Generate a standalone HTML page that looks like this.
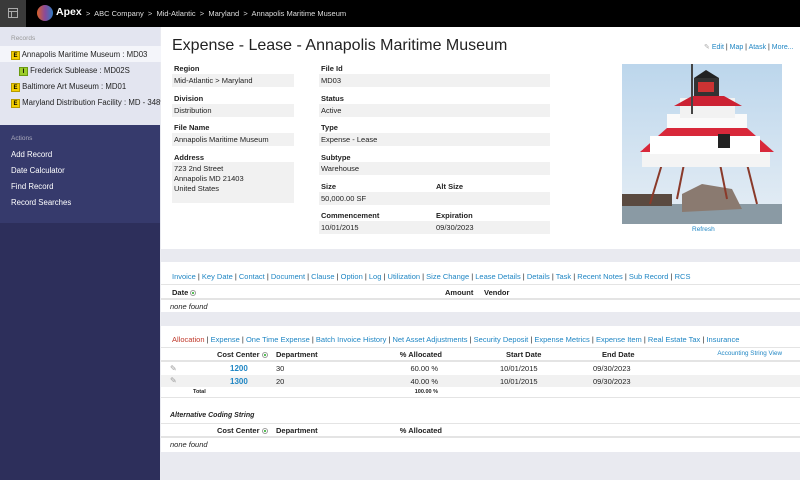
<!DOCTYPE html>
<html><head><meta charset="utf-8"><style>
*{margin:0;padding:0;box-sizing:border-box}
body{width:800px;height:480px;overflow:hidden;font-family:"Liberation Sans",sans-serif;font-size:8px;color:#222;background:#e9eaf0;position:relative}
.a{position:absolute}
#top{left:0;top:0;width:800px;height:27px;background:#000}
#side1{left:0;top:27px;width:160px;height:98px;background:#e3e5f0}
#side2{left:0;top:125px;width:160px;height:98px;background:#363a6c}
#side3{left:0;top:223px;width:160px;height:257px;background:#2d2f5b}
.lbl{font-weight:bold;font-size:7.5px}
.val{background:#f1f1f1;height:13px;padding:2px 2px;font-size:7.5px}
a,.lk{color:#1f86c4;text-decoration:none}
.panel{background:#fff;left:161px;width:639px}
.tl{font-size:7.5px;white-space:nowrap}
.badge{display:inline-block;width:9px;height:9px;background:#f4cf00;border:1px solid #b59a00;font-size:6px;font-weight:bold;text-align:center;line-height:8px;color:#000}
.side-item{font-size:7.8px;color:#fff}
.plus{display:inline-block;width:6px;height:6px;border:1px solid #999;border-radius:50%;vertical-align:middle;position:relative}
.plus:after{content:"";position:absolute;left:1px;top:1px;width:2px;height:2px;background:#2a2;border-radius:50%}
</style></head><body>
<div class="a" id="top"></div>
<div class="a" style="left:0;top:0;width:26px;height:27px;background:#3a3a3a"></div>
<div class="a" style="left:8px;top:8px;width:10px;height:10px;border:1px solid #aaa"></div>
<div class="a" style="left:8px;top:11px;width:10px;height:1px;background:#aaa"></div>
<div class="a" style="left:11px;top:11px;width:1px;height:7px;background:#aaa"></div>
<div class="a" style="left:37px;top:5px;width:16px;height:16px;border-radius:50%;background:linear-gradient(90deg,#d9612a,#8a4a9a 50%,#2f7ac0)"></div>
<div class="a" style="left:56px;top:6px;color:#fff;font-weight:bold;font-size:10.5px">Apex</div>
<div class="a" style="left:86px;top:9px;color:#ddd;font-size:7.5px;white-space:nowrap">&gt;&nbsp; ABC Company &nbsp;&gt;&nbsp; Mid-Atlantic &nbsp;&gt;&nbsp; Maryland &nbsp;&gt;&nbsp; Annapolis Maritime Museum</div>

<div class="a" id="side1"></div>
<div class="a" id="side2"></div>
<div class="a" id="side3"></div>
<div class="a" style="left:11px;top:35px;color:#999;font-size:6.5px">Records</div>
<div class="a" style="left:0;top:46px;width:161px;height:16px;background:#f4f5fa"></div>
<div class="a tl" style="left:11px;top:50px;font-size:7.8px"><span class="badge">E</span> Annapolis Maritime Museum : MD03</div>
<div class="a tl" style="left:19px;top:66px;font-size:7.8px"><span class="badge" style="background:#9ccc2a;border-color:#6a9a10">I</span> Frederick Sublease : MD02S</div>
<div class="a tl" style="left:11px;top:82px;font-size:7.8px"><span class="badge">E</span> Baltimore Art Museum : MD01</div>
<div class="a tl" style="left:11px;top:98px;width:150px;overflow:hidden;font-size:7.8px"><span class="badge">E</span> Maryland Distribution Facility : MD - 3489</div>
<div class="a" style="left:11px;top:135px;color:#aab;font-size:6.5px">Actions</div>
<div class="a side-item" style="left:11px;top:150px">Add Record</div>
<div class="a side-item" style="left:11px;top:166px">Date Calculator</div>
<div class="a side-item" style="left:11px;top:182px">Find Record</div>
<div class="a side-item" style="left:11px;top:198px">Record Searches</div>

<div class="a panel" style="top:27px;height:222px"></div>
<div class="a" style="left:172px;top:37px;font-size:16px;white-space:nowrap">Expense - Lease - Annapolis Maritime Museum</div>
<div class="a tl" style="left:704px;top:43px;font-size:7px"><span style="color:#aaa">✎</span> <a>Edit</a> | <a>Map</a> | <a>Atask</a> | <a>More...</a></div>

<div class="a lbl" style="left:174px;top:64px">Region</div>
<div class="a val" style="left:172px;top:74px;width:122px">Mid-Atlantic &gt; Maryland</div>
<div class="a lbl" style="left:174px;top:94px">Division</div>
<div class="a val" style="left:172px;top:104px;width:122px">Distribution</div>
<div class="a lbl" style="left:174px;top:123px">File Name</div>
<div class="a val" style="left:172px;top:133px;width:122px">Annapolis Maritime Museum</div>
<div class="a lbl" style="left:174px;top:153px">Address</div>
<div class="a val" style="left:172px;top:162px;width:122px;height:41px;line-height:10px">723 2nd Street<br>Annapolis MD 21403<br>United States</div>

<div class="a lbl" style="left:321px;top:64px">File Id</div>
<div class="a val" style="left:319px;top:74px;width:231px">MD03</div>
<div class="a lbl" style="left:321px;top:94px">Status</div>
<div class="a val" style="left:319px;top:104px;width:231px">Active</div>
<div class="a lbl" style="left:321px;top:123px">Type</div>
<div class="a val" style="left:319px;top:133px;width:231px">Expense - Lease</div>
<div class="a lbl" style="left:321px;top:153px">Subtype</div>
<div class="a val" style="left:319px;top:162px;width:231px">Warehouse</div>
<div class="a lbl" style="left:321px;top:182px">Size</div>
<div class="a lbl" style="left:436px;top:182px">Alt Size</div>
<div class="a val" style="left:319px;top:192px;width:231px">50,000.00 SF</div>
<div class="a lbl" style="left:321px;top:211px">Commencement</div>
<div class="a lbl" style="left:436px;top:211px">Expiration</div>
<div class="a val" style="left:319px;top:221px;width:231px">10/01/2015<span style="position:absolute;left:117px">09/30/2023</span></div>

<svg class="a" style="left:622px;top:64px" width="160" height="160" viewBox="0 0 160 160">
<defs><linearGradient id="sk" x1="0" y1="0" x2="0" y2="1"><stop offset="0" stop-color="#bcd6ec"/><stop offset="1" stop-color="#e6eef5"/></linearGradient></defs>
<rect width="160" height="160" fill="url(#sk)"/>
<rect y="140" width="160" height="20" fill="#8a9aa4"/>
<rect x="0" y="130" width="50" height="12" fill="#5a4a40"/>
<path d="M60 130 L80 120 L110 125 L120 145 L60 148Z" fill="#8a7a70"/>
<path d="M28 140 L40 100 M135 140 L125 100 M55 135 L62 100 M105 135 L98 100" stroke="#8a3a2a" stroke-width="2"/>
<rect x="20" y="85" width="128" height="18" fill="#f4f4f4"/>
<rect x="45" y="50" width="80" height="38" fill="#fafafa"/>
<path d="M18 88 L45 64 L125 64 L152 88Z" fill="#d8283a"/>
<rect x="28" y="72" width="110" height="18" fill="#fff"/>
<rect x="58" y="34" width="55" height="20" fill="#f2f2f2"/>
<path d="M52 42 L70 32 L102 32 L120 42Z" fill="#cc2233"/>
<rect x="72" y="14" width="25" height="18" fill="#333"/>
<rect x="76" y="18" width="16" height="10" fill="#c33"/>
<path d="M72 14 L84 6 L97 14Z" fill="#222"/>
<rect x="69" y="0" width="2" height="50" fill="#444"/>
<rect x="96" y="70" width="12" height="14" fill="#222"/>
</svg>
<div class="a lk" style="left:692px;top:226px;font-size:6.5px">Refresh</div>

<div class="a panel" style="top:262px;height:50px"></div>
<div class="a tl" style="left:172px;top:272px"><a>Invoice</a> | <a>Key Date</a> | <a>Contact</a> | <a>Document</a> | <a>Clause</a> | <a>Option</a> | <a>Log</a> | <a>Utilization</a> | <a>Size Change</a> | <a>Lease Details</a> | <a>Details</a> | <a>Task</a> | <a>Recent Notes</a> | <a>Sub Record</a> | <a>RCS</a></div>
<div class="a" style="left:161px;top:284px;width:639px;height:1px;background:#e4e4e4"></div>
<div class="a lbl" style="left:172px;top:288px">Date <span class="plus"></span></div>
<div class="a lbl" style="left:445px;top:288px">Amount</div>
<div class="a lbl" style="left:484px;top:288px">Vendor</div>
<div class="a" style="left:161px;top:298px;width:639px;height:2px;background:#e4e4e4"></div>
<div class="a" style="left:170px;top:302px;font-style:italic;font-size:7.5px">none found</div>

<div class="a panel" style="top:326px;height:126px"></div>
<div class="a tl" style="left:172px;top:335px"><span style="color:#c0392b">Allocation</span> | <a>Expense</a> | <a>One Time Expense</a> | <a>Batch Invoice History</a> | <a>Net Asset Adjustments</a> | <a>Security Deposit</a> | <a>Expense Metrics</a> | <a>Expense Item</a> | <a>Real Estate Tax</a> | <a>Insurance</a></div>
<div class="a" style="left:161px;top:347px;width:639px;height:1px;background:#e4e4e4"></div>
<div class="a lbl" style="left:217px;top:350px">Cost Center <span class="plus"></span></div>
<div class="a lbl" style="left:276px;top:350px">Department</div>
<div class="a lbl" style="left:382px;top:350px;width:60px;text-align:right">% Allocated</div>
<div class="a lbl" style="left:506px;top:350px">Start Date</div>
<div class="a lbl" style="left:602px;top:350px">End Date</div>
<div class="a lk" style="left:682px;top:350px;width:100px;text-align:right;font-size:6.3px;white-space:nowrap">Accounting String View</div>
<div class="a" style="left:161px;top:360px;width:639px;height:2px;background:#e4e4e4"></div>
<div class="a" style="left:170px;top:364px;color:#999">✎</div>
<div class="a lk" style="left:230px;top:364px;font-weight:bold">1200</div>
<div class="a tl" style="left:276px;top:364px">30</div>
<div class="a tl" style="left:380px;top:364px;width:58px;text-align:right">60.00 %</div>
<div class="a tl" style="left:500px;top:364px">10/01/2015</div>
<div class="a tl" style="left:593px;top:364px">09/30/2023</div>
<div class="a" style="left:161px;top:375px;width:639px;height:12px;background:#f1f1f1"></div>
<div class="a" style="left:170px;top:376px;color:#999">✎</div>
<div class="a lk" style="left:230px;top:377px;font-weight:bold">1300</div>
<div class="a tl" style="left:276px;top:377px">20</div>
<div class="a tl" style="left:380px;top:377px;width:58px;text-align:right">40.00 %</div>
<div class="a tl" style="left:500px;top:377px">10/01/2015</div>
<div class="a tl" style="left:593px;top:377px">09/30/2023</div>
<div class="a" style="left:193px;top:389px;font-size:5.5px;font-weight:bold">Total</div>
<div class="a" style="left:380px;top:389px;width:58px;text-align:right;font-size:5.5px;font-weight:bold">100.00 %</div>
<div class="a" style="left:161px;top:397px;width:639px;height:1px;background:#e4e4e4"></div>
<div class="a" style="left:170px;top:412px;font-weight:bold;font-style:italic;font-size:7px">Alternative Coding String</div>
<div class="a" style="left:161px;top:423px;width:639px;height:1px;background:#e4e4e4"></div>
<div class="a lbl" style="left:217px;top:426px">Cost Center <span class="plus"></span></div>
<div class="a lbl" style="left:276px;top:426px">Department</div>
<div class="a lbl" style="left:382px;top:426px;width:60px;text-align:right">% Allocated</div>
<div class="a" style="left:161px;top:436px;width:639px;height:2px;background:#e4e4e4"></div>
<div class="a" style="left:170px;top:440px;font-style:italic;font-size:7.5px">none found</div>
</body></html>
